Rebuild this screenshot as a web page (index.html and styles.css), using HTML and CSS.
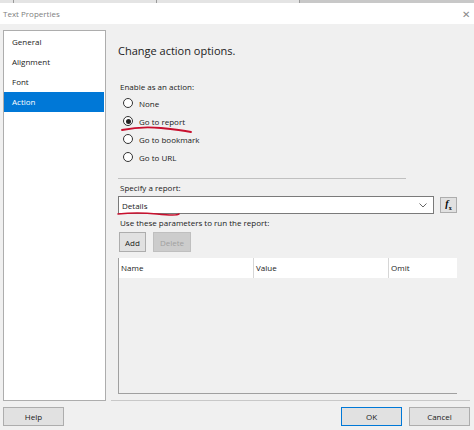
FILE: index.html
```html
<!DOCTYPE html>
<html lang="en">
<head>
  <meta charset="UTF-8" />
  <meta name="viewport" content="width=device-width, initial-scale=1.0">
  <title>Text Properties</title>
  <link rel="stylesheet" href="styles.css">
</head>
<body>

  <!-- edge of the window behind the dialog -->
  <div class="behind">
    <span class="behind-cell c1"></span>
    <span class="behind-cell c2"></span>
    <span class="behind-cell c3"></span>
    <span class="behind-cell c4"></span>
  </div>

  <div class="titlebar">
    <span class="title">Text Properties</span>
    <span class="close">&#x2715;</span>
  </div>

  <div class="dialog">
    <div class="main">
      <ul class="nav">
        <li>General</li>
        <li>Alignment</li>
        <li>Font</li>
        <li class="active">Action</li>
      </ul>

      <div class="content">
        <h1>Change action options.</h1>

        <div class="label first">Enable as an action:</div>
        <div class="radios">
          <label class="radio"><span class="dot"></span>None</label>
          <label class="radio checked">
            <span class="dot"></span>Go to report
            <svg class="scribble scribble-report" width="72" height="10" viewBox="0 0 72 10">
              <path d="M1 6 Q 20 2 40 4 T 70 8" fill="none" stroke="#c8102e" stroke-width="1.8" stroke-linecap="round"/>
            </svg>
          </label>
          <label class="radio"><span class="dot"></span>Go to bookmark</label>
          <label class="radio"><span class="dot"></span>Go to URL</label>
        </div>

        <hr class="sep">

        <div class="label">Specify a report:</div>
        <div class="combo-row">
          <div class="combo">
            <span class="combo-value">Details</span>
            <svg class="chevron" width="8" height="5" viewBox="0 0 8 5">
              <path d="M0.5 0.5 L4 4 L7.5 0.5" fill="none" stroke="#666" stroke-width="1"/>
            </svg>
            <svg class="scribble scribble-details" width="64" height="6" viewBox="0 0 64 6">
              <path d="M1 3 Q 20 1 40 3 T 62 3" fill="none" stroke="#c8102e" stroke-width="1.6" stroke-linecap="round"/>
            </svg>
          </div>
          <button class="fx"><i>f</i><sub>x</sub></button>
        </div>

        <div class="label">Use these parameters to run the report:</div>
        <div class="param-buttons">
          <button class="btn">Add</button>
          <button class="btn" disabled>Delete</button>
        </div>

        <div class="grid">
          <div class="grid-head">
            <span class="col col-name">Name</span>
            <span class="col col-value">Value</span>
            <span class="col col-omit">Omit</span>
          </div>
          <div class="grid-body"></div>
        </div>
      </div>
    </div>

    <div class="footer">
      <button class="btn wide">Help</button>
      <div class="footer-right">
        <button class="btn wide default">OK</button>
        <button class="btn wide">Cancel</button>
      </div>
    </div>
  </div>

</body>
</html>
```

FILE: styles.css
```css
* {
  box-sizing: border-box;
}

body {
  margin: 0;
  width: 474px;
  height: 430px;
  overflow: hidden;
  background: #f0f0f0;
  font-family: 'Open Sans', 'Noto Sans', sans-serif;
  font-size: 8px;
  color: #1a1a1a;
  display: flex;
  flex-direction: column;
}

/* ======= window behind ======= */
.behind {
  height: 3px;
  display: flex;
  background: #d0d0d0;
}

.behind-cell {
  height: 100%;
  background: #e4e4e4;
  border-left: 1px solid #9a9a9a;
}

.c1 { width: 13px; border-left: none; }
.c2 { width: 143px; }
.c3 { width: 143px; }
.c4 { flex-grow: 1; background: #c8c8c8; }

/* ======= title ======= */
.titlebar {
  height: 21px;
  background: #fff;
  display: flex;
  align-items: center;
  justify-content: space-between;
  padding: 0 4px 0 3px;
}

.title {
  color: #808080;
  font-size: 8px;
}

.close {
  color: #888;
  font-size: 10px;
}

/* ======= dialog ======= */
.dialog {
  flex-grow: 1;
  display: flex;
  flex-direction: column;
}

.main {
  display: flex;
  padding: 6px 4px 0 3px;
  height: 377px;
}

.nav {
  list-style: none;
  margin: 0;
  padding: 1px 0 0;
  width: 103px;
  height: 371px;
  background: #fff;
  border: 1px solid #adadad;
}

.nav li {
  height: 20px;
  line-height: 20px;
  padding-left: 8px;
  font-size: 8px;
}

.nav li.active {
  background: #0078d7;
  color: #fff;
  margin-right: 1px;
}

.content {
  flex-grow: 1;
  margin-left: 5px;
  padding-left: 7px;
  border-bottom: 1px solid #c8c8c8;
  height: 371px;
  display: flex;
  flex-direction: column;
}

h1 {
  margin: 13px 0 0;
  font-weight: normal;
  font-size: 11px;
  line-height: 16px;
  color: #222;
}

.label {
  line-height: 12px;
  margin-top: 3px;
  padding-left: 2px;
}

.label.first {
  margin-top: 22px;
}

/* ======= radios ======= */
.radios {
  display: flex;
  flex-direction: column;
  margin-top: 1px;
}

.radio {
  position: relative;
  height: 18px;
  display: flex;
  align-items: center;
  padding-left: 5px;
}

.dot {
  width: 10px;
  height: 10px;
  border: 1px solid #333;
  border-radius: 50%;
  background: #fff;
  margin-right: 6px;
  display: flex;
  align-items: center;
  justify-content: center;
}

.radio.checked .dot::after {
  content: "";
  width: 5px;
  height: 5px;
  border-radius: 50%;
  background: #222;
}

.scribble {
  position: absolute;
  pointer-events: none;
}

.scribble-report {
  left: 3px;
  top: 12px;
}

.scribble-details {
  left: -2px;
  top: 14px;
}

.sep {
  margin: 12px 0 0;
  width: 288px;
  border: none;
  border-top: 1px solid #c0c0c0;
  height: 0;
}

/* ======= report combo ======= */
.combo-row {
  display: flex;
  align-items: center;
  margin-top: 2px;
}

.combo {
  position: relative;
  width: 316px;
  height: 18px;
  background: #fff;
  border: 1px solid #7a7a7a;
  display: flex;
  align-items: center;
  justify-content: space-between;
  padding: 0 6px 0 3px;
}

.fx {
  width: 17px;
  height: 16px;
  margin-left: 6px;
  border: 1px solid #adadad;
  background: #e1e1e1;
  padding: 0;
  font-family: 'Liberation Serif', serif;
  font-weight: bold;
  font-size: 10px;
  line-height: 1;
}

.fx sub {
  font-size: 6px;
}

/* ======= buttons ======= */
.param-buttons {
  display: flex;
  gap: 6px;
  margin-top: 3px;
}

.btn {
  height: 20px;
  padding: 0 5px;
  font-family: inherit;
  font-size: 8px;
  color: #1a1a1a;
  background: #e1e1e1;
  border: 1px solid #adadad;
  margin-left: 1px;
}

.param-buttons .btn:first-child {
  width: 27px;
}

.param-buttons .btn:disabled {
  width: 38px;
  color: #a0a0a0;
  background: #cccccc;
  border-color: #bfbfbf;
}

/* ======= parameters grid ======= */
.grid {
  margin-top: 6px;
  width: 339px;
  height: 136px;
  display: flex;
  flex-direction: column;
  border-left: 1px solid #a0a0a0;
  border-bottom: 1px solid #a0a0a0;
}

.grid-head {
  display: flex;
  height: 20px;
  background: #fff;
}

.col {
  line-height: 20px;
  padding-left: 2px;
  border-right: 1px solid #d6d6d6;
}

.col-name { width: 135px; }
.col-value { width: 135px; }
.col-omit { flex-grow: 1; border-right: none; }

.grid-body {
  flex-grow: 1;
  background: #f0f0f0;
}

/* ======= footer ======= */
.footer {
  display: flex;
  justify-content: space-between;
  padding: 6px 4px 0 3px;
}

.footer-right {
  display: flex;
  gap: 7px;
}

.btn.wide {
  width: 61px;
  height: 19px;
  margin-left: 0;
}

.btn.default {
  border: 1px solid #0078d7;
}
```
